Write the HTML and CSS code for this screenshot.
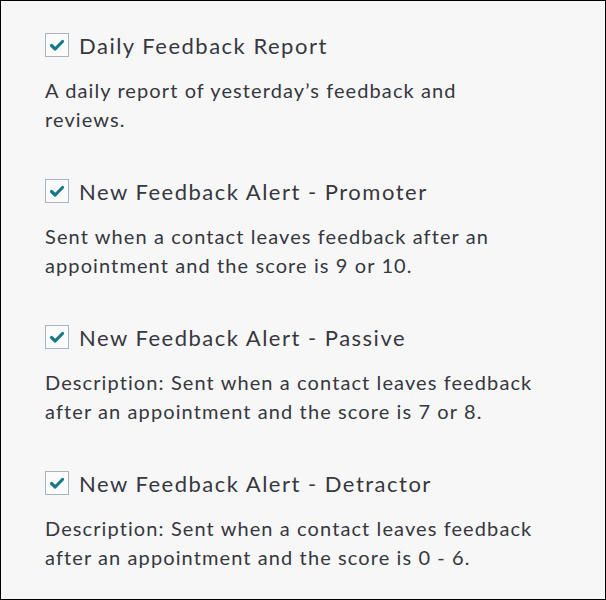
FILE: index.html
```html
<!DOCTYPE html>
<html lang="en">
<head>
    <meta charset="UTF-8">
    <meta name="viewport" content="width=device-width, initial-scale=1.0">
    <title>Notification Settings</title>
    <link rel="stylesheet" href="styles.css">
</head>
<body>
    <div class="panel">
        <div class="setting">
            <label class="setting-title">
                <span class="check"><svg viewBox="0 0 16 16"><path d="M2.5 8.5 L6.2 12 L13.5 4.5" /></svg></span>
                Daily Feedback Report
            </label>
            <p class="setting-desc">A daily report of yesterday’s feedback and reviews.</p>
        </div>

        <div class="setting">
            <label class="setting-title">
                <span class="check"><svg viewBox="0 0 16 16"><path d="M2.5 8.5 L6.2 12 L13.5 4.5" /></svg></span>
                New Feedback Alert - Promoter
            </label>
            <p class="setting-desc">Sent when a contact leaves feedback after an appointment and the score is 9 or 10.</p>
        </div>

        <div class="setting">
            <label class="setting-title">
                <span class="check"><svg viewBox="0 0 16 16"><path d="M2.5 8.5 L6.2 12 L13.5 4.5" /></svg></span>
                New Feedback Alert - Passive
            </label>
            <p class="setting-desc">Description: Sent when a contact leaves feedback after an appointment and the score is 7 or 8.</p>
        </div>

        <div class="setting">
            <label class="setting-title">
                <span class="check"><svg viewBox="0 0 16 16"><path d="M2.5 8.5 L6.2 12 L13.5 4.5" /></svg></span>
                New Feedback Alert - Detractor
            </label>
            <p class="setting-desc">Description: Sent when a contact leaves feedback after an appointment and the score is 0 - 6.</p>
        </div>
    </div>
</body>
</html>
```

FILE: styles.css
```css
body {
    margin: 0;
    font-family: Lato, "Noto Sans", sans-serif;
    color: #363740;
}
.panel {
    box-sizing: border-box;
    width: 606px;
    height: 600px;
    border: 1px solid #000;
    background-color: #f7f7f7;
    padding: 32px 40px 0 44px;
}
.setting {
    margin-bottom: 45px;
}
.setting-title {
    display: flex;
    align-items: center;
    gap: 10px;
    height: 24px;
    font-size: 22px;
    letter-spacing: 1.5px;
}
.check {
    box-sizing: border-box;
    width: 24px;
    height: 24px;
    border: 1px solid #a9b5bd;
    background-color: #fbfbfb;
    display: flex;
    align-items: center;
    justify-content: center;
}
.check svg {
    width: 16px;
    height: 16px;
    fill: none;
    stroke: #16798a;
    stroke-width: 3.2;
    stroke-linecap: round;
    stroke-linejoin: round;
}
.setting-desc {
    margin: 19px 0 0;
    max-width: 490px;
    font-size: 20px;
    line-height: 29px;
    letter-spacing: 1.1px;
}
```
